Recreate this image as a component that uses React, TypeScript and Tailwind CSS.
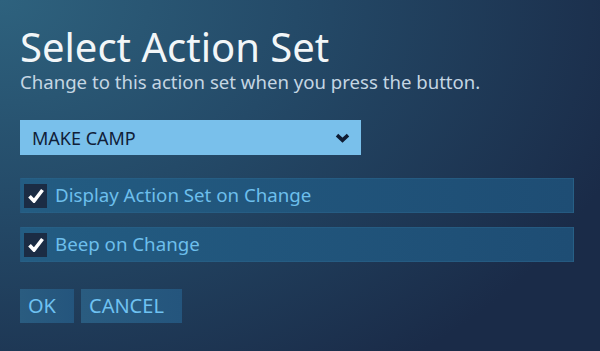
import React from "react";

function Check() {
  return (
    <div className="w-[23px] h-[24px] bg-[#1b2c44] flex items-center justify-center shrink-0">
      <svg width="16" height="15" viewBox="0 0 16 15">
        <path d="M1.5 8.2 L6 13 L14.5 2" fill="none" stroke="#ffffff" strokeWidth="3.6" strokeLinejoin="miter" />
      </svg>
    </div>
  );
}

function Row({ label }: { label: string }) {
  return (
    <div className="w-[554px] h-[35px] flex items-center pl-[3px] gap-[8px] bg-[linear-gradient(90deg,#235c82,#1e4d74)] border border-[#2a6389]/60">
      <Check />
      <span className="text-[18.7px] text-[#6dbfec] leading-none">{label}</span>
    </div>
  );
}

export default function App() {
  return (
    <div
      className="w-[600px] h-[351px] overflow-hidden bg-[radial-gradient(ellipse_110%_130%_at_0%_0%,#2e627e_0%,#244a68_45%,#1a2b48_100%)] pl-[20px] flex flex-col"
      style={{ fontFamily: '"Noto Sans", "Open Sans", sans-serif' }}
    >
      <h1 className="mt-[26px] text-[40px] leading-[42px] text-[#f2f6f8] font-normal">Select Action Set</h1>
      <p className="mt-[3px] text-[18.6px] leading-[22px] text-[#c5d6e3]">Change to this action set when you press the button.</p>
      <div className="mt-[27px] w-[341px] h-[35px] bg-[#79c0eb] flex items-center justify-between pl-[12px] pr-[11px]">
        <span className="text-[18px] text-[#102038] leading-none">MAKE CAMP</span>
        <svg width="15" height="10" viewBox="0 0 15 10">
          <path d="M2 2.2 L7.5 7.2 L13 2.2" fill="none" stroke="#0f1c33" strokeWidth="3.6" />
        </svg>
      </div>
      <div className="mt-[23px] flex flex-col gap-[14px]">
        <Row label="Display Action Set on Change" />
        <Row label="Beep on Change" />
      </div>
      <div className="mt-[27px] flex gap-[7px]">
        <button className="h-[34px] pl-[8px] pr-[18px] bg-[linear-gradient(90deg,#2a5c80,#24557d)] text-[20px] text-[#6fc2f2] leading-none">OK</button>
        <button className="h-[34px] pl-[8px] pr-[18px] bg-[linear-gradient(90deg,#2a5c80,#24557d)] text-[20px] text-[#6fc2f2] leading-none">CANCEL</button>
      </div>
    </div>
  );
}
